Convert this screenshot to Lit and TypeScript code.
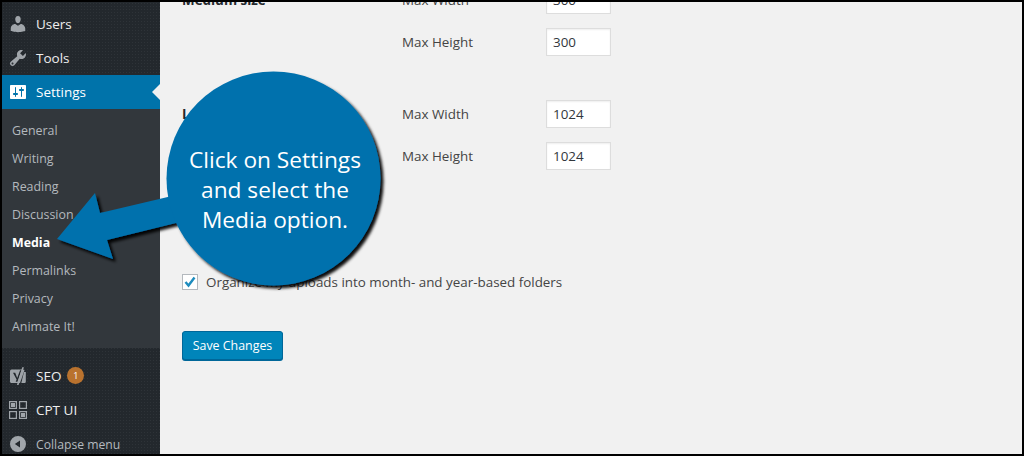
import { LitElement, html, css, svg } from "lit";
import { customElement } from "lit/decorators.js";

const submenu = ["General", "Writing", "Reading", "Discussion", "Media", "Permalinks", "Privacy", "Animate It!"];

const usersIcon = svg`<svg class="ico" viewBox="0 0 20 20"><path fill="#a0a5aa" d="M10 9.25c-2.27 0-2.73-3.44-2.73-3.44C7 4.02 7.82 2 9.97 2c2.16 0 2.98 2.02 2.71 3.81 0 0-.41 3.44-2.68 3.44zm0 2.57L12.72 10c2.39 0 4.52 2.33 4.52 4.53v2.49s-3.65 1.13-7.24 1.13c-3.65 0-7.24-1.13-7.24-1.13v-2.49c0-2.25 1.94-4.48 4.47-4.48z"/></svg>`;
const toolsIcon = svg`<svg class="ico" viewBox="0 0 20 20"><path fill="#a0a5aa" d="M16.68 9.77c-1.34 1.34-3.3 1.67-4.95.99l-5.41 6.52c-.99.99-2.59.99-3.58 0s-.99-2.59 0-3.57l6.52-5.42c-.68-1.65-.35-3.61.99-4.95 1.28-1.28 3.12-1.62 4.72-1.06l-2.89 2.89 2.82 2.82 2.86-2.87c.53 1.58.18 3.39-1.08 4.65zM3.81 16.21c.4.39 1.04.39 1.43 0 .4-.4.4-1.04 0-1.43-.39-.4-1.03-.4-1.43 0-.39.39-.39 1.03 0 1.43z"/></svg>`;
const settingsIcon = svg`<svg class="ico" viewBox="0 0 20 20"><path fill="#fff" fill-rule="evenodd" d="M18 16V4c0-.55-.45-1-1-1H3c-.55 0-1 .45-1 1v12c0 .55.45 1 1 1h14c.55 0 1-.45 1-1zM8 11h1c.55 0 1 .45 1 1s-.45 1-1 1H8v1.500c0 .28-.22.5-.5.5s-.5-.22-.5-.5V13H6c-.55 0-1-.45-1-1s.45-1 1-1h1V5.500c0-.28.22-.5.5-.5s.5.22.5.5V11zm5-2h-1c-.55 0-1-.45-1-1s.45-1 1-1h1V5.500c0-.28.22-.5.5-.5s.5.22.5.5V7h1c.55 0 1 .45 1 1s-.45 1-1 1h-1v5.500c0 .28-.22.5-.5.5s-.5-.22-.5-.5V9z"/></svg>`;
const seoIcon = svg`<svg class="ico" viewBox="0 0 20 20"><path fill="#9ea3a8" d="M3.500 3.500h11c1 0 1.600.3 2 .7L12 17h-8.500C2.600 17 2 16.400 2 15.500v-10C2 4.300 2.500 3.500 3.500 3.500z"/><path fill="#23282d" d="M5 6.800h2.200l2 5.300 2.800-7.600 1.700-.7-4.300 12h-1.700l.9-2.200z"/><path fill="#9ea3a8" d="M14.200 1.300h1.700L10.600 19h-1.700z"/><path fill="#9ea3a8" d="M16 6h1.800v9.500c0 1-.7 1.500-1.500 1.500h-3z"/></svg>`;
const cptIcon = svg`<svg class="ico" viewBox="0 0 20 20"><g fill="none" stroke="#a0a5aa" stroke-width="1.200"><rect x="1.600" y="1.600" width="6.800" height="6.800"/><rect x="11.600" y="1.600" width="6.800" height="6.800"/><rect x="1.600" y="11.600" width="6.800" height="6.800"/><rect x="11.600" y="11.600" width="6.800" height="6.800"/></g><g fill="#a0a5aa"><rect x="3" y="3" width="4" height="4"/><rect x="13" y="13" width="4" height="4"/></g></svg>`;
const collapseIcon = svg`<svg class="ico" viewBox="0 0 20 20"><path fill="#a0a5aa" d="M10 2a8 8 0 1 1 0 16 8 8 0 0 1 0-16zm2 4.500L6.800 10l5.200 3.500z"/></svg>`;

@customElement("app-root")
export class AppRoot extends LitElement {
  static styles = css`
    :host {
      display: block;
      width: 1024px;
      height: 456px;
      box-sizing: border-box;
      position: relative;
      overflow: hidden;
      border: 2px solid #000;
      background: #f1f1f1;
      font-family: "Open Sans", sans-serif;
      color: #444;
    }
    .page { display: flex; height: 100%; }
    .side {
      width: 158px;
      flex: none;
      background-color: #23282d;
      background-image: radial-gradient(circle, rgba(255,255,255,.05) 0.7px, transparent 0.8px);
      background-size: 3px 3px;
      display: flex;
      flex-direction: column;
      padding-top: 5px;
    }
    .item {
      height: 34px;
      display: flex;
      align-items: center;
      color: #eee;
      font-size: 13.5px;
      flex: none;
      position: relative;
      padding-bottom: 1px;
      box-sizing: border-box;
    }
    .ico { width: 20px; height: 20px; display: block; margin: 0 8px 0 6px; flex: none; }
    .item.active { background: #0073aa; color: #fff; }
    .item.active::after {
      content: "";
      position: absolute;
      right: 0;
      top: 9px;
      border: 8px solid transparent;
      border-right-color: #f1f1f1;
      border-left-width: 0;
    }
    .sub {
      background: #32373c;
      padding: 8px 0 7px 10px;
      margin-bottom: 11px;
      flex: none;
    }
    .sub div {
      height: 28px;
      line-height: 28px;
      font-size: 12.4px;
      color: #b4b9be;
    }
    .sub div.cur { color: #fff; font-weight: 700; }
    .badge {
      width: 17px;
      height: 17px;
      border-radius: 50%;
      background: #b9722e;
      color: #fff;
      font-size: 9px;
      line-height: 17px;
      text-align: center;
      margin-left: 6px;
    }
    .item.collapse { font-size: 12.2px; color: #b4b9be; padding-bottom: 0; }
    .main {
      flex: 1;
      padding-left: 22px;
      margin-top: -16px;
      font-size: 13.4px;
    }
    .group { display: grid; grid-template-columns: 220px 144px 64px; row-gap: 14px; margin-bottom: 44px; align-items: center; }
    .head { font-weight: 700; color: #23282d; }
    .group .lab { grid-column: 2; }
    .group .box { grid-column: 3; }
    .box {
      box-sizing: border-box;
      width: 65px;
      height: 28px;
      background: #fff;
      border: 1px solid #ddd;
      box-shadow: inset 0 1px 2px rgba(0,0,0,.07);
      color: #32373c;
      padding-left: 6px;
      line-height: 26px;
    }
    .check { display: flex; align-items: center; margin-top: 103px; }
    .cb {
      width: 16px; height: 16px; box-sizing: border-box;
      border: 1px solid #b4b9be; background: #fff;
      margin-right: 8px; flex: none;
    }
    .cb svg { display: block; width: 14px; height: 14px; }
    .btn {
      margin-top: 40px;
      width: 101px;
      height: 29px;
      box-sizing: border-box;
      background: #0085ba;
      border: 1px solid #006799;
      border-radius: 3px;
      box-shadow: 0 1px 0 #006799;
      color: #fff;
      font-size: 12.4px;
      line-height: 27px;
      text-align: center;
    }
    .callout {
      position: absolute;
      left: -2px;
      top: -2px;
      width: 400px;
      height: 300px;
    }
    .callout svg { display: block; position: absolute; inset: 0; }
    .say {
      position: absolute;
      left: 166px;
      top: 72px;
      width: 215px;
      height: 213px;
      box-sizing: border-box;
      padding: 22px 0 0 3px;
      display: flex;
      flex-direction: column;
      justify-content: center;
      text-align: center;
      color: #fff;
      font-size: 22.7px;
      line-height: 30px;
    }
  `;

  render() {
    return html`
      <div class="page">
        <nav class="side">
          <div class="item">${usersIcon}Users</div>
          <div class="item">${toolsIcon}Tools</div>
          <div class="item active">${settingsIcon}Settings</div>
          <div class="sub">
            ${submenu.map((s) => html`<div class=${s === "Media" ? "cur" : ""}>${s}</div>`)}
          </div>
          <div class="item">${seoIcon}SEO<span class="badge">1</span></div>
          <div class="item">${cptIcon}CPT UI</div>
          <div class="item collapse">${collapseIcon}Collapse menu</div>
        </nav>
        <main class="main">
          <div class="group">
            <div class="head">Medium size</div><div class="lab">Max Width</div><div class="box">300</div>
            <div class="lab">Max Height</div><div class="box">300</div>
          </div>
          <div class="group">
            <div class="head">Large size</div><div class="lab">Max Width</div><div class="box">1024</div>
            <div class="lab">Max Height</div><div class="box">1024</div>
          </div>
          <div class="check">
            <div class="cb"><svg viewBox="0 0 14 14"><path fill="none" stroke="#1e8cbe" stroke-width="2.400" d="M2.500 7l3 3.500L11.500 2.500"/></svg></div>
            Organize my uploads into month- and year-based folders
          </div>
          <div class="btn">Save Changes</div>
        </main>
      </div>
      <div class="callout">
        <svg width="400" height="300" viewBox="0 0 400 300">
          <defs>
            <filter id="s" x="-10%" y="-10%" width="125%" height="125%">
              <feDropShadow dx="3" dy="3" stdDeviation="1.600" flood-color="#000" flood-opacity=".95"/>
            </filter>
          </defs>
          <g filter="url(#s)" fill="#0071ad">
            <path d="M57 239 L95 193 L100 213 L172 196 L180 222 L107 240 L113 259 Z"/>
            <circle cx="273.500" cy="178.500" r="107"/>
          </g>
        </svg>
        <div class="say"><div>Click on Settings</div><div>and select the</div><div>Media option.</div></div>
      </div>
    `;
  }
}
